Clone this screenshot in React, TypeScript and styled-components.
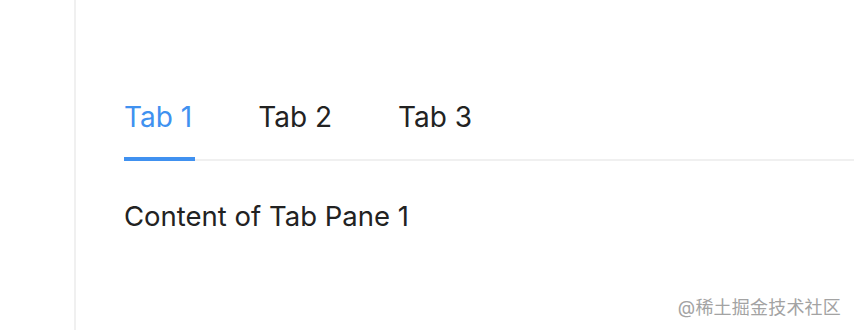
import React, { useState } from 'react';
import styled, { createGlobalStyle } from 'styled-components';

const GlobalStyle = createGlobalStyle`
  html, body {
    margin: 0;
    padding: 0;
    background: #fff;
    overflow: hidden;
  }
  body {
    font-family: Inter, "Noto Sans", "Noto Sans CJK SC", sans-serif;
    color: rgba(0, 0, 0, 0.85);
  }
`;

const Page = styled.div`
  display: flex;
  height: 330px;
  position: relative;
  overflow: hidden;
`;

const Sidebar = styled.aside`
  width: 74px;
  flex-shrink: 0;
  border-right: 2px solid #f0f0f0;
`;

const Main = styled.main`
  flex: 1;
  padding: 99px 0 0 48px;
  min-width: 0;
`;

const TabNav = styled.div`
  display: flex;
  gap: 66px;
  border-bottom: 2px solid #f0f0f0;
`;

const TabButton = styled.div<{ $active: boolean }>`
  position: relative;
  font-size: 28px;
  line-height: 36px;
  padding-bottom: 26px;
  margin-bottom: -2px;
  color: ${p => (p.$active ? '#4091f0' : '#222')};
  cursor: pointer;
  &::after {
    content: '';
    display: ${p => (p.$active ? 'block' : 'none')};
    position: absolute;
    left: 0;
    right: -3px;
    bottom: 0;
    height: 4px;
    background: #4091f0;
  }
`;

const Pane = styled.div`
  margin-top: 37px;
  font-size: 27.5px;
  line-height: 36px;
  color: #222;
`;

const NextHeading = styled.h3`
  margin: 90px 0 0 4px;
  font-size: 26px;
  line-height: 36px;
  font-weight: 600;
  color: #222;
`;

const Watermark = styled.div`
  position: absolute;
  right: 13px;
  bottom: 11px;
  font-size: 18px;
  color: #a3a3a3;
  letter-spacing: 0.2px;
`;

const tabs = ['Tab 1', 'Tab 2', 'Tab 3'];

export default function App() {
  const [active, setActive] = useState(0);
  return (
    <>
      <GlobalStyle />
      <Page>
        <Sidebar />
        <Main>
          <TabNav>
            {tabs.map((t, i) => (
              <TabButton key={t} $active={i === active} onClick={() => setActive(i)}>
                {t}
              </TabButton>
            ))}
          </TabNav>
          <Pane>Content of Tab Pane {active + 1}</Pane>
          <NextHeading>Add &amp; Hide Tabs</NextHeading>
        </Main>
        <Watermark>@稀土掘金技术社区</Watermark>
      </Page>
    </>
  );
}
